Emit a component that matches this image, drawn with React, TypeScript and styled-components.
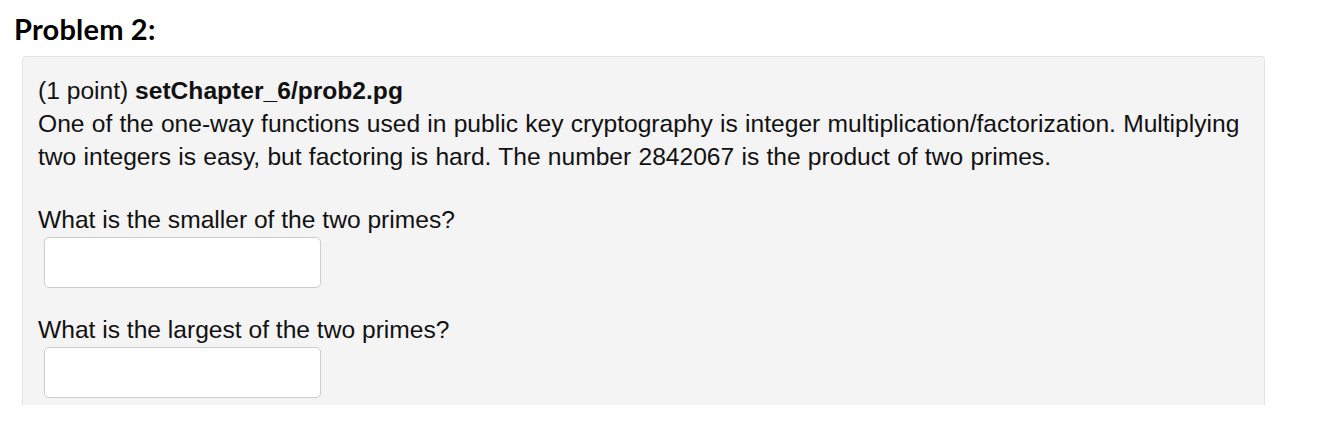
import styled, { createGlobalStyle } from "styled-components";

export default function App() {
  return (
    <>
      <GlobalStyle />
      <Page>
        <Heading>Problem 2:</Heading>
        <ProblemPanel>
          <Meta>
            (1 point) <strong>setChapter_6/prob2.pg</strong>
          </Meta>
          <Statement>
            One of the one-way functions used in public key cryptography is
            integer multiplication/factorization. Multiplying two integers is
            easy, but factoring is hard. The number 2842067 is the product of
            two primes.
          </Statement>
          <Question>
            <QuestionLabel>What is the smaller of the two primes?</QuestionLabel>
            <AnswerInput type="text" aria-label="smaller prime" />
          </Question>
          <Question gap={25}>
            <QuestionLabel>What is the largest of the two primes?</QuestionLabel>
            <AnswerInput type="text" aria-label="largest prime" />
          </Question>
        </ProblemPanel>
      </Page>
    </>
  );
}

const GlobalStyle = createGlobalStyle`
  html, body {
    margin: 0;
    padding: 0;
    background: #ffffff;
  }
`;

const Page = styled.div`
  width: 1322px;
  height: 448px;
  padding: 12px 0 0 14px;
  box-sizing: border-box;
  overflow: hidden;
`;

const Heading = styled.h2`
  margin: 0;
  font-family: Lato, "Open Sans", sans-serif;
  font-weight: 700;
  font-size: 29px;
  line-height: 34px;
  letter-spacing: 0.2px;
  color: #000000;
`;

const ProblemPanel = styled.section`
  margin: 10px 0 0 8px;
  width: 1243px;
  height: 349px;
  box-sizing: border-box;
  padding: 17px 15px 0;
  background: #f4f4f4;
  border: 1px solid #e4e4e4;
  border-bottom: none;
  border-radius: 4px 4px 0 0;
  font-family: "Liberation Sans", Arial, sans-serif;
  font-size: 24.6px;
  line-height: 33px;
  color: #111111;
`;

const Meta = styled.div`
  strong {
    font-weight: 700;
  }
`;

const Statement = styled.p`
  margin: 0;
  word-spacing: 0.4px;
`;

const Question = styled.div<{ gap?: number }>`
  display: flex;
  flex-direction: column;
  align-items: flex-start;
  margin-top: ${({ gap }) => gap ?? 30}px;
`;

const QuestionLabel = styled.div``;

const AnswerInput = styled.input`
  margin: 1px 0 0 6px;
  width: 277px;
  height: 51px;
  box-sizing: border-box;
  background: #ffffff;
  border: 1px solid #cccccc;
  border-radius: 5px;
  outline: none;
  font: inherit;
`;
